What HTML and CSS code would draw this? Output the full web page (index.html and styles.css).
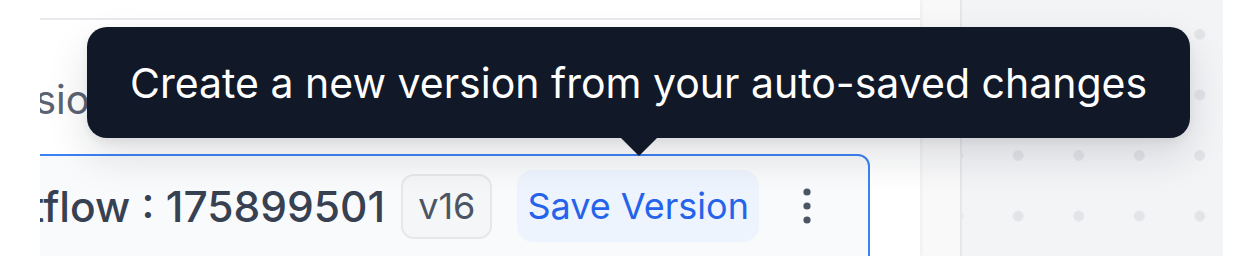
FILE: index.html
```html
<!DOCTYPE html>
<html>
<head>
<meta charset="utf-8">
<link rel="stylesheet" href="styles.css">
</head>
<body>
<div class="frame">
  <section class="panel">
    <div class="panel-top"></div>
    <div class="panel-body">
      <h2 class="heading">Versions</h2>
      <div class="card">
        <div class="row">
          <span class="title">Chatflow : 175899501</span>
          <span class="badge">v16</span>
          <button class="save">Save Version</button>
          <button class="kebab" aria-label="More">
            <svg width="14" height="36" viewBox="0 0 14 36"><circle cx="7" cy="4" r="3.6" fill="#4b5563"/><circle cx="7" cy="18" r="3.6" fill="#4b5563"/><circle cx="7" cy="32" r="3.6" fill="#4b5563"/></svg>
          </button>
        </div>
      </div>
    </div>
  </section>
  <div class="strip"></div>
  <div class="canvas"></div>
  <div class="tooltip">Create a new version from your auto-saved changes</div>
</div>
</body>
</html>
```
FILE: styles.css
```css
html, body {
  margin: 0;
  padding: 0;
  background: #ffffff;
}
body {
  font-family: Inter, "Noto Sans", sans-serif;
}
.frame {
  position: relative;
  margin-left: 40px;
  width: 1183px;
  height: 256px;
  overflow: hidden;
  display: flex;
}
.panel {
  width: 880px;
  flex: none;
  background: #ffffff;
  overflow: hidden;
  display: flex;
  flex-direction: column;
  position: relative;
  z-index: 1;
  box-shadow: 1px 0 4px rgba(17, 24, 39, 0.06);
}
.panel-top {
  height: 18px;
  border-bottom: 2px solid #e8eaee;
  flex: none;
}
.panel-body {
  display: flex;
  flex-direction: column;
}
.heading {
  margin: 56px 0 0 -69px;
  font-size: 40px;
  line-height: 48px;
  font-weight: 400;
  color: #5b6271;
  white-space: nowrap;
}
.card {
  margin: 30px 0 0 -40px;
  width: 870px;
  height: 140px;
  box-sizing: border-box;
  border: 2px solid #3b82f6;
  border-radius: 12px;
  background: #f9fafb;
  padding-top: 14px;
}
.row {
  display: flex;
  align-items: center;
  height: 72px;
}
.title {
  margin-left: -53px;
  font-size: 42.5px;
  font-weight: 500;
  color: #374151;
  white-space: nowrap;
}
.badge {
  margin-left: 16px;
  height: 65px;
  box-sizing: border-box;
  padding: 0 15px;
  display: flex;
  align-items: center;
  border: 2px solid #e5e7eb;
  border-radius: 13px;
  background: #f5f6f7;
  font-size: 36px;
  color: #4b5563;
}
.save {
  margin-left: 25px;
  height: 72px;
  padding: 0 10px;
  border: none;
  border-radius: 16px;
  background: #eef4fe;
  color: #2563eb;
  font-family: inherit;
  font-size: 36px;
  font-weight: 400;
}
.kebab {
  margin-left: 41px;
  border: none;
  background: transparent;
  padding: 0;
  display: flex;
}
.strip {
  width: 40px;
  flex: none;
  background: #f9f9fa;
  border-right: 2px solid #e6e7eb;
}
.canvas {
  flex: 1;
  background-color: #f3f4f6;
  background-image: radial-gradient(circle, #e3e4e8 5px, rgba(227, 228, 232, 0) 5.6px);
  background-size: 60.5px 60.6px;
  background-position: 26px 4px;
}
.tooltip {
  position: absolute;
  z-index: 5;
  left: 47px;
  top: 27px;
  height: 111px;
  box-sizing: border-box;
  padding: 0 43px;
  display: flex;
  align-items: center;
  background: #111827;
  border-radius: 20px;
  color: #ffffff;
  font-size: 41px;
  white-space: nowrap;
  box-shadow: 0 18px 40px rgba(17, 24, 39, 0.13), 0 4px 10px rgba(17, 24, 39, 0.06);
}
.tooltip::after {
  content: "";
  position: absolute;
  left: 533px;
  top: 110px;
  border-left: 19px solid transparent;
  border-right: 19px solid transparent;
  border-top: 19px solid #111827;
}
```
